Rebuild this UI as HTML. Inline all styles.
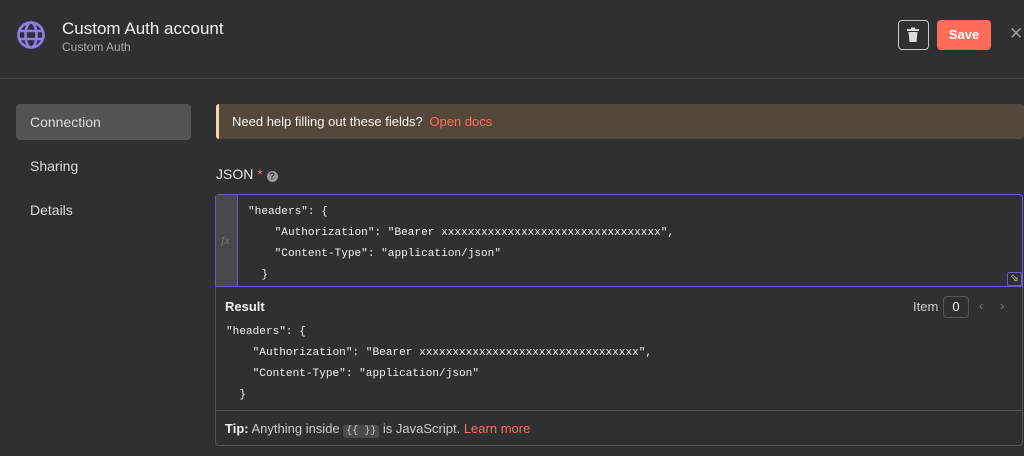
<!DOCTYPE html>
<html><head><style>
*{box-sizing:border-box;margin:0;padding:0}
body{width:1024px;height:456px;background:#2f3032;font-family:"Liberation Sans",sans-serif;color:#e0e0e0;position:relative;overflow:hidden}
.abs{position:absolute}
.mono{font-family:"Liberation Mono",monospace;font-size:11.1px;color:#f0f0f0;white-space:pre}
</style></head><body>
<svg class="abs" style="left:16px;top:20px" width="30" height="30" viewBox="0 0 30 30" fill="none" stroke="#8c7fe8" stroke-width="2.6">
<circle cx="15" cy="15" r="12.5"/><ellipse cx="15" cy="15" rx="5.5" ry="12.5"/><line x1="3" y1="11" x2="27" y2="11"/><line x1="3" y1="19" x2="27" y2="19"/></svg>
<div class="abs" style="left:62px;top:19px;font-size:17px;color:#f0f0f0">Custom Auth account</div>
<div class="abs" style="left:62px;top:40px;font-size:12px;color:#a8a9b0">Custom Auth</div>
<div class="abs" style="left:898px;top:20px;width:31px;height:30px;border:1px solid #c8c8c8;border-radius:4px"></div>
<svg class="abs" style="left:905px;top:27px" width="16" height="16" viewBox="0 0 16 16"><rect x="2" y="2" width="12" height="2" fill="#ddd"/><rect x="6" y="0.5" width="4" height="2" fill="#ddd"/><path d="M3.5 5h9l-1 10h-7z" fill="#ddd"/></svg>
<div class="abs" style="left:937px;top:20px;width:54px;height:30px;background:#ff6d5a;border-radius:4px;color:#fff;font-weight:bold;font-size:13px;text-align:center;line-height:30px">Save</div>
<div class="abs" style="left:1009px;top:24px;font-size:17px;color:#999">✕</div>
<div class="abs" style="left:0;top:78px;width:1024px;height:1px;background:#4a4b4e"></div>
<div class="abs" style="left:16px;top:104px;width:175px;height:36px;background:#525356;border-radius:4px"></div>
<div class="abs" style="left:30px;top:114px;font-size:14px;color:#dcdcdc">Connection</div>
<div class="abs" style="left:30px;top:158px;font-size:14px;color:#dcdcdc">Sharing</div>
<div class="abs" style="left:30px;top:202px;font-size:14px;color:#dcdcdc">Details</div>
<div class="abs" style="left:216px;top:104px;width:808px;height:35px;background:#54483a;border-left:3px solid #f4d9a3;border-radius:3px"></div>
<div class="abs" style="left:232px;top:114px;font-size:13px;color:#f5f5f5">Need help filling out these fields? <span style="color:#ff6d5a;margin-left:3px">Open docs</span></div>
<div class="abs" style="left:216px;top:166px;font-size:14px;color:#e8e8e8">JSON <span style="color:#ff6d5a">*</span> <span style="display:inline-block;width:11px;height:11px;border-radius:50%;background:#999;color:#2f3032;font-size:9px;text-align:center;line-height:11px;font-weight:bold;vertical-align:0">?</span></div>
<div class="abs" style="left:215px;top:194px;width:808px;height:252px;border:1px solid #555;border-radius:4px"></div>
<div class="abs" style="left:215px;top:194px;width:808px;height:93px;border:1px solid #6b5cc9;border-radius:4px 4px 0 0;background:#2f3032"></div>
<div class="abs" style="left:216px;top:195px;width:22px;height:91px;background:#49494c;border-right:1px solid #6b5cc9"></div>
<div class="abs" style="left:221px;top:233px;font-size:12px;color:#777;font-style:italic;font-family:'Liberation Serif',serif">fx</div>
<div class="abs mono" style="left:248px;top:202px;line-height:21px">"headers": {
    "Authorization": "Bearer xxxxxxxxxxxxxxxxxxxxxxxxxxxxxxxxx",
    "Content-Type": "application/json"
  }</div>
<div class="abs" style="left:1007px;top:272px;width:15px;height:14px;border:1px solid #6b5cc9;border-radius:2px;color:#ddd;font-size:10px;text-align:center;line-height:12px">⬂</div>
<div class="abs" style="left:225px;top:299px;font-size:13px;font-weight:bold;color:#eee">Result</div>
<div class="abs" style="left:913px;top:299px;font-size:13px;color:#ccc">Item</div>
<div class="abs" style="left:943px;top:296px;width:26px;height:22px;border:1px solid #555;border-radius:4px;font-size:13px;text-align:center;line-height:20px;color:#eee">0</div>
<div class="abs" style="left:979px;top:298px;font-size:13px;color:#777">‹</div>
<div class="abs" style="left:1000px;top:298px;font-size:13px;color:#777">›</div>
<div class="abs mono" style="left:226px;top:322px;line-height:21px">"headers": {
    "Authorization": "Bearer xxxxxxxxxxxxxxxxxxxxxxxxxxxxxxxxx",
    "Content-Type": "application/json"
  }</div>
<div class="abs" style="left:216px;top:410px;width:806px;height:1px;background:#4e4f52"></div>
<div class="abs" style="left:225px;top:421px;font-size:13px;color:#ccc"><b style="color:#eee">Tip:</b> Anything inside <span style="background:#4a4b4e;border-radius:3px;padding:1px 3px;font-size:10px;font-family:'Liberation Mono',monospace">{{ }}</span> is JavaScript. <span style="color:#ff6d5a">Learn more</span></div>
</body></html>
